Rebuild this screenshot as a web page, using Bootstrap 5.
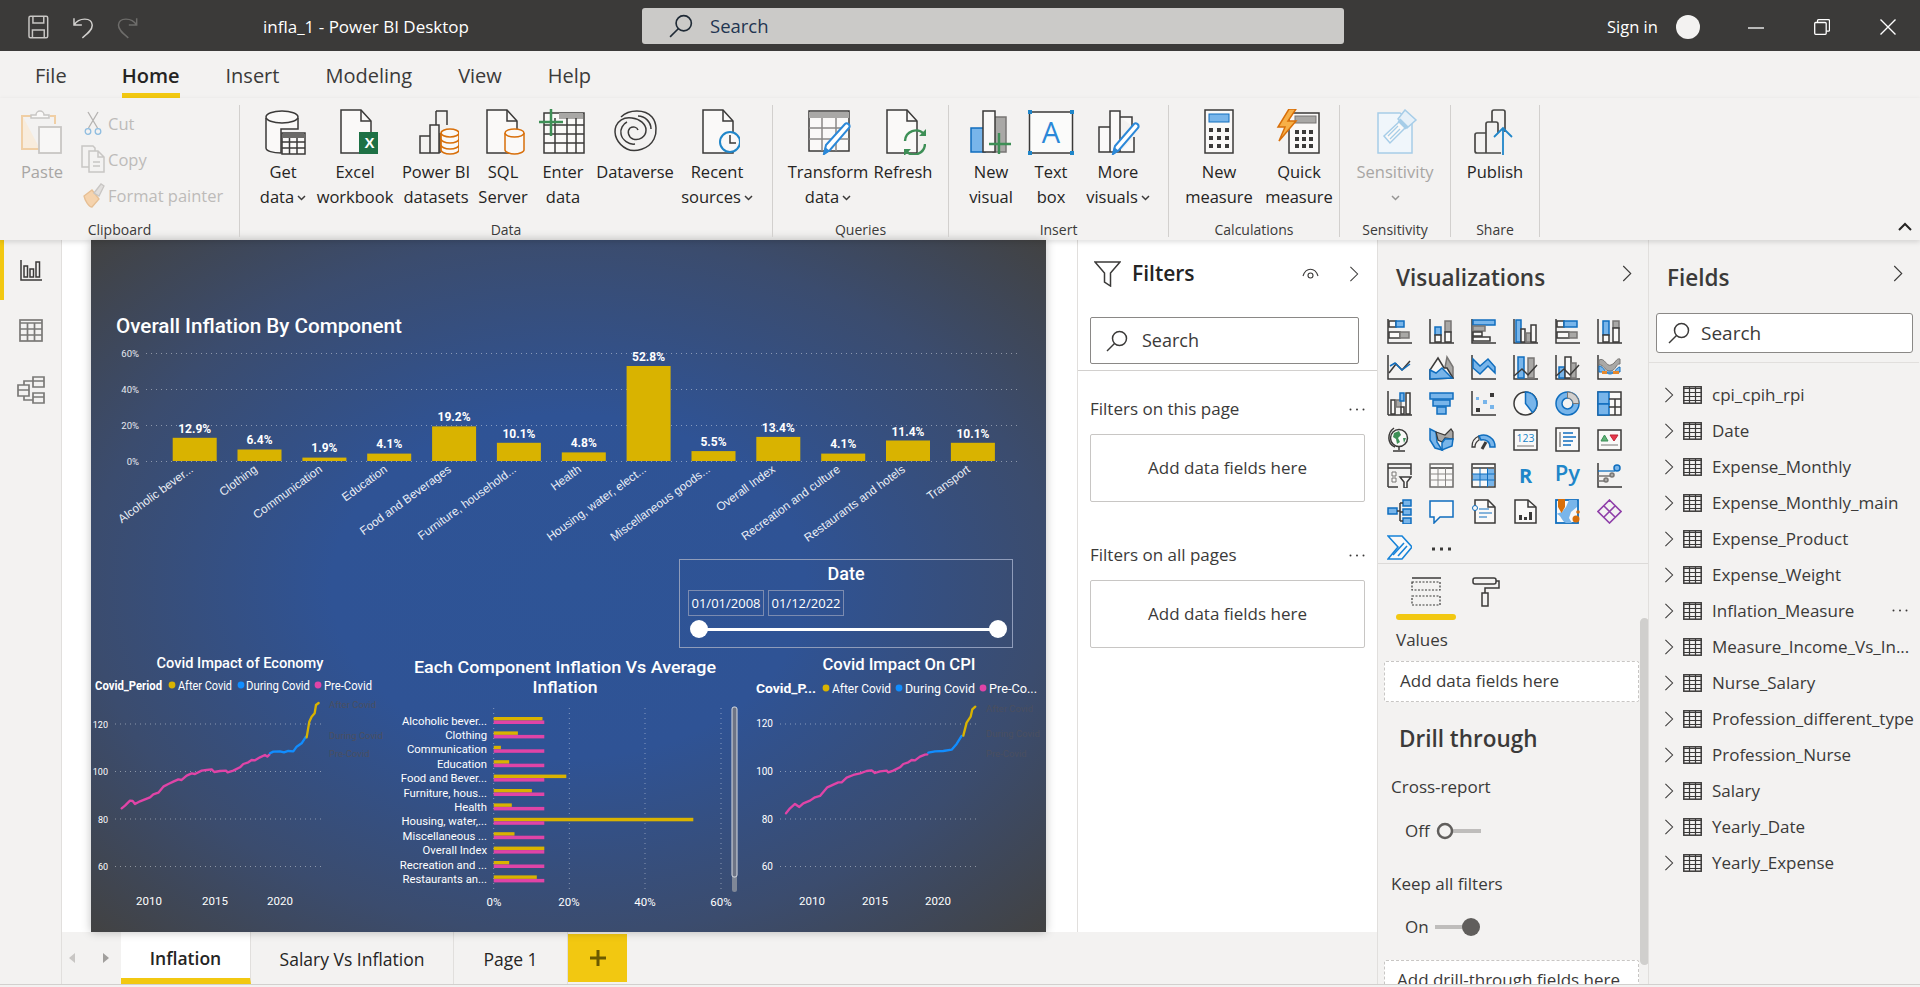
<!DOCTYPE html>
<html lang="en">
<head>
    <meta charset="UTF-8">
    <title>infla_1 - Power BI Desktop</title>
    <link href="https://cdn.jsdelivr.net/npm/bootstrap@5.3.0/dist/css/bootstrap.min.css" rel="stylesheet">
    <style>
        html, body { height: 987px; overflow: hidden; }
        body { font-family: "Open Sans", "Noto Sans", sans-serif; background: #f3f2f1; color: #252423; font-size: 17px; }

        /* title bar */
        .pb-title { height: 51px; background: #3b3a39; color: #fff; flex: none; padding-top: 3px; }
        .pb-title-name { width: 206px; margin-left: 125px; font-size: 17px; white-space: nowrap; }
        .pb-quick { width: 138px; padding-left: 28px; gap: 24px; }
        .pb-search { width: 702px; height: 36px; margin-left: 173px; margin-top: -3px; background: #cbcac8; border-radius: 3px; color: #1f3551; font-size: 18.500px; padding-left: 27px; gap: 17px; }
        .pb-sign { margin-left: 263px; font-size: 16.500px; }
        .pb-avatar { width: 24px; height: 24px; border-radius: 50%; background: #f3f2f1; margin-left: 18px; }
        .pb-winbtns { margin-left: 48px; gap: 50px; }

        /* tabs */
        .pb-tabs { height: 47px; flex: none; padding-left: 35px; font-size: 20px; gap: 46px; color: #3b3a39; }
        .pb-tab { height: 47px; line-height: 50px; }
        .pb-tab-on { color: #252423; font-weight: 600; border-bottom: 5px solid #f2c811; margin-left: 9px; height: 47px; }

        /* ribbon */
        .pb-ribbon { height: 142px; flex: none; position: relative; font-size: 16.500px; line-height: 25px; box-shadow: 0 2px 5px rgba(0,0,0,.13); z-index: 3; }
        .rb-group { height: 132px; margin-top: 7px; border-right: 1px solid #d2d0ce; display: flex; flex-direction: column; flex: none; }
        .rb-items { flex: 1 1 auto; display: flex; min-height: 0; padding-top: 4px; }
        .rb-name { text-align: center; font-size: 14px; line-height: 14px; height: 14px; color: #3b3a39; }
        .rb-btn { display: flex; flex-direction: column; align-items: center; text-align: center; white-space: nowrap; flex: none; }
        .rb-btn svg.ic { display: block; margin-bottom: 4px; width: 46px; height: 46px; flex: none; }
        .rb-cv { width: 9px; height: 6px; vertical-align: 2px; margin-left: 3px; }
        .rb-dim { opacity: .5; }
        .rb-off { color: #a8a6a4; }
        .g-clip { width: 240px; } .g-data { width: 533px; } .g-query { width: 176px; }
        .g-ins { width: 220px; } .g-calc { width: 171px; } .g-sens { width: 111px; } .g-share { width: 89px; }
        .pd-7 { padding-left: 7px; } .pd-15 { padding-left: 15px; } .pd-12 { padding-left: 12px; } .pd-10 { padding-left: 10px; }
        .w44 { width: 44px; } .w60 { width: 60px; } .w68 { width: 68px; } .w70 { width: 70px; } .w72 { width: 72px; } .w74 { width: 74px; }
        .w76 { width: 76px; } .w80 { width: 80px; } .w90 { width: 90px; } .w96 { width: 96px; }
        .wfull { width: 100%; }
        .clip-paste { width: 84px; margin-right: -4px; }
        .clip-rows { color: #bdbbb9; margin-top: -4px; }
        .clip-row { height: 36px; display: flex; align-items: center; }
        .clip-ic { width: 26px; margin-right: 2px; display: flex; justify-content: center; }
        .rb-caret { position: absolute; right: 8px; bottom: 9px; }

        /* main */
        .pb-main { height: 744px; flex: none; }
        .pb-rail { width: 62px; flex: none; border-right: 1px solid #e1dfdd; position: relative; }
        .rail-mark { position: absolute; left: 0; top: 0; width: 4px; height: 60px; background: #f2c811; }
        .rail-ic { height: 60px; }
        .pb-mid { width: 1315px; flex: none; }
        .pb-work { height: 692px; flex: none; background: #fff; }
        .pb-canvas-wrap { width: 1015px; padding-left: 29px; flex: none; }
        .pb-canvas { width: 955px; height: 692px; position: relative; box-shadow: 0 0 9px rgba(0,0,0,.25);
            background: radial-gradient(ellipse farthest-corner at 50% 50%, #2e5496 0%, #2f5395 35%, #3b4c6e 71%, #424242 100%); }
        .pb-canvas > svg { display: block; }

        /* date slicer */
        .dt-slicer { position: absolute; left: 588px; top: 319px; width: 334px; height: 89px; border: 1px solid #8f9cba; color: #fff; padding: 0 8px; font-family: Roboto, sans-serif; }
        .dt-head { text-align: center; font-weight: 500; font-size: 18px; line-height: 27px; margin-bottom: 3px; }
        .dt-box { width: 76px; height: 26px; border: 1px solid #7b8bb0; text-align: center; font-size: 13px; line-height: 24px; font-family: "Open Sans", sans-serif; }
        .dt-track { height: 3px; background: #fff; margin: 12px 6px 0 11px; position: relative; }
        .dt-knob { position: absolute; top: -8px; width: 18px; height: 18px; border-radius: 50%; background: #fff; }
        .dt-kl { left: -9px; } .dt-kr { right: -9px; }

        /* filters */
        .pb-filters { width: 300px; flex: none; border-left: 1px solid #e1dfdd; color: #3b3a39; background: #fff; }
        .flt-head { height: 68px; padding: 0 18px 0 16px; }
        .flt-title { font-size: 21px; font-weight: 600; margin-left: 11px; color: #252423; }
        .flt-eye { margin-right: 30px; }
        .flt-search { height: 47px; margin: 9px 18px 0 12px; border: 1px solid #8a8886; border-radius: 2px; padding-left: 15px; gap: 14px; color: #3b3a39; font-size: 18px; }
        .flt-rule { border-bottom: 1px solid #d2d0ce; height: 7px; }
        .flt-sec { padding: 0 12px; margin-top: 26px; font-size: 17px; line-height: 24px; }
        .flt-drop { height: 68px; border: 1px solid #c8c6c4; border-radius: 2px; margin-top: 13px; margin-bottom: 41px; }

        /* bottom tabs */
        .pb-pages { height: 52px; flex: none; font-size: 17.500px; }
        .pg-arrows { width: 59px; padding-left: 7px; gap: 26px; }
        .pg-tab { height: 52px; border-right: 1px solid #e1dfdd; padding-top: 2px; }
        .pg-on { width: 130px; background: #fff; border-bottom: 6px solid #f2c811; font-weight: 600; padding-top: 6px; }
        .pg-b { width: 203px; } .pg-c { width: 114px; }
        .pg-add { width: 59px; height: 48px; margin-top: 2px; background: #f2c811; color: #6b5a00; }

        /* visualizations */
        .pb-viz { width: 272px; flex: none; border-left: 1px solid #e1dfdd; border-right: 1px solid #e1dfdd; position: relative; overflow: hidden; }
        .pn-head { height: 79px; padding-left: 18px; padding-right: 16px; padding-bottom: 4px; }
        .pn-head svg { margin-top: -8px; }
        .pn-title { font-size: 22.500px; font-weight: 600; color: #3b3a39; }
        .viz-grid { display: grid; grid-template-columns: repeat(6, 42px); grid-auto-rows: 36px; padding-left: 9px; height: 245px; border-bottom: 1px solid #dcdad8; }
        .viz-grid svg { width: 25px; height: 25px; display: block; }
        .viz-tabs { height: 50px; padding-left: 33px; gap: 31px; padding-top: 13px; }
        .viz-line { width: 60px; height: 6px; margin-left: 18px; background: #f2c811; border-radius: 3px; }
        .viz-label { padding-left: 18px; margin-top: 8px; line-height: 24px; font-size: 17px; color: #3b3a39; }
        .viz-drop { width: 255px; height: 41px; margin: 9px 0 0 6px; background: #fff; border: 1px dashed #c8c6c4; border-radius: 2px; padding-left: 15px; line-height: 38px; font-size: 17px; color: #3b3a39; white-space: nowrap; overflow: hidden; }
        .viz-drop2 { margin-top: 21px; padding-left: 12px; }
        .viz-h2 { font-size: 22.500px; font-weight: 600; color: #3b3a39; padding-left: 21px; margin-top: 21px; line-height: 32px; }
        .viz-sub { padding-left: 13px; font-size: 17px; color: #3b3a39; line-height: 24px; }
        .viz-sub-a { margin-top: 20px; } .viz-sub-b { margin-top: 29px; }
        .viz-tog { padding-left: 27px; height: 24px; font-size: 17px; color: #3b3a39; gap: 6px; }
        .viz-tog-a { margin-top: 20px; } .viz-tog-b { margin-top: 19px; }
        .viz-bar { position: absolute; left: 262px; top: 378px; width: 9px; height: 347px; border-radius: 5px; background: #d0cfcd; }

        /* fields */
        .pb-fields { width: 270px; flex: none; }
        .fld-search { height: 40px; margin: -6px 6px 0 7px; background: #fff; border: 1px solid #8a8886; border-radius: 3px; padding-left: 11px; gap: 11px; color: #3b3a39; font-size: 19px; }
        .fld-rule { height: 10px; border-bottom: 1px solid #e1dfdd; }
        .fld-list { margin-top: 14px; --bs-list-group-bg: transparent; --bs-list-group-border-width: 0; --bs-list-group-color: #3b3a39; }
        .fld-item { height: 36px; padding: 0 0 0 15px; display: flex; align-items: center; font-size: 17px; white-space: nowrap; }
        .fld-item .tb { width: 19px; height: 18px; margin: 0 10px 0 9px; flex: none; }
        .fld-dots { position: absolute; right: 11px; top: 16px; }
        .pb-foot { height: 3px; border-top: 1px solid #d2d0ce; flex: none; }

        /* svg helpers */
        .k { fill: none; stroke: #3b3a39; stroke-width: 1.5; }
        .w { fill: #faf9f8; stroke: #3b3a39; stroke-width: 1.5; }
        .b { fill: #78b5ea; stroke: #106ebe; stroke-width: 1.5; }
        .bk { fill: none; stroke: #106ebe; stroke-width: 1.5; }
        .g { fill: #a9a8a6; stroke: #787674; stroke-width: 1.5; }
        .o { fill: #faf9f8; stroke: #d86f0a; stroke-width: 1.5; }
        .sk { fill: none; stroke: #4a4947; stroke-width: 1.7; }
        .chev { fill: none; stroke: #3b3a39; stroke-width: 1.3; }

        /* report canvas */
        .tt { font-family: Roboto, sans-serif; font-weight: 500; fill: #fff; }
        .tv { font-family: Roboto, sans-serif; font-weight: 700; font-size: 12px; fill: #fff; text-anchor: middle; }
        .tx { font-family: "Liberation Sans", sans-serif; font-size: 11.800px; fill: #e9edf5; text-anchor: end; }
        .ta { font-family: Roboto, sans-serif; font-size: 9.500px; fill: #e6e9f0; text-anchor: end; }
        .tl { font-family: Roboto, sans-serif; font-size: 12.500px; fill: #fff; }
        .tlb { font-family: Roboto, sans-serif; font-size: 12.500px; font-weight: 700; fill: #fff; }
        .tm { font-family: Roboto, sans-serif; font-size: 11.300px; fill: #fff; text-anchor: end; }
        .tn { font-family: Roboto, sans-serif; font-size: 11.500px; fill: #fff; text-anchor: middle; }
        .ty { font-family: Roboto, sans-serif; font-size: 9px; fill: #fff; text-anchor: end; }
        .ty2 { font-size: 10px; }
        .td { font-family: Roboto, sans-serif; font-size: 9.500px; fill: #4a4f60; }
        .gd { stroke: rgba(255,255,255,.42); stroke-width: 1; stroke-dasharray: 1 4; fill: none; }
        .yl { fill: #d9b300; } .pk { fill: #e044a7; }
        .ln { fill: none; stroke-width: 7; stroke-linejoin: round; stroke-linecap: round; }
    </style>
</head>
<body class="d-flex flex-column">

<svg width="0" height="0" class="position-absolute">
    <symbol id="tbl" viewBox="0 0 19 18">
        <rect x=".8" y=".8" width="17.400" height="16.400" fill="#f3f2f1" stroke="#3b3a39" stroke-width="1.500"/>
        <path d="M0 2.500H19M0 6.500H19M0 10.500H19M0 14.500H19M6.500 1V17M12.500 1V17" stroke="#3b3a39" stroke-width="1.200" fill="none"/>
    </symbol>
    <symbol id="cvr" viewBox="0 0 12 20"><path d="M1.500 1l9 9-9 9" class="chev"/></symbol>
    <symbol id="cvd" viewBox="0 0 9 6"><path d="M1 1l3.500 3.500L8 1" fill="none" stroke="#3b3a39" stroke-width="1.500"/></symbol>
    <symbol id="mag" viewBox="0 0 22 22"><circle cx="13.500" cy="8.500" r="7" fill="none" stroke="currentColor" stroke-width="1.500"/><path d="M8.500 13.500L1 21" fill="none" stroke="currentColor" stroke-width="1.500"/></symbol>
    <symbol id="dots" viewBox="0 0 16 3"><circle cx="1.500" cy="1.500" r="1" fill="#3b3a39"/><circle cx="8" cy="1.500" r="1" fill="#3b3a39"/><circle cx="14.500" cy="1.500" r="1" fill="#3b3a39"/></symbol>
</svg>

<!-- title bar -->
<div class="pb-title d-flex align-items-center">
    <div class="pb-quick d-flex align-items-center">
        <svg width="21" height="24" viewBox="0 0 21 24" fill="none" stroke="#c8c6c4" stroke-width="1.500"><path d="M1 2.500q0-1.500 1.500-1.500h16q1.500 0 1.500 1.500v19q0 1.500-1.500 1.500h-16q-1.500 0-1.500-1.500z"/><path d="M5 1v7h11V1M4.500 23v-8h12v8"/></svg>
        <svg width="21" height="24" viewBox="0 0 21 24" fill="none" stroke="#d2d0ce" stroke-width="1.500"><path d="M1 3v7h8M1 10C6 2 19 2 19.500 10c.3 5-5 9-10 13"/></svg>
        <svg width="21" height="24" viewBox="0 0 21 24" fill="none" stroke="#6e6d6b" stroke-width="1.500"><path d="M20 3v7h-8M20 10C15 2 2 2 1.500 10c-.3 5 5 9 10 13"/></svg>
    </div>
    <div class="pb-title-name">infla_1 - Power BI Desktop</div>
    <div class="pb-search d-flex align-items-center">
        <svg width="24" height="24"><use href="#mag" color="#1f2a36"/></svg>
        <span>Search</span>
    </div>
    <div class="pb-sign">Sign in</div>
    <div class="pb-avatar"></div>
    <div class="pb-winbtns d-flex align-items-center">
        <svg width="16" height="16" viewBox="0 0 16 16"><path d="M0 9h16" stroke="#fff" stroke-width="1.300"/></svg>
        <svg width="16" height="16" viewBox="0 0 16 16" fill="none" stroke="#fff" stroke-width="1.300"><rect x=".7" y="3.500" width="11.500" height="11.800" rx="1"/><path d="M3.500 3.500V1.700q0-1 1-1h10q1 0 1 1v9.500q0 1-1 1h-2.300"/></svg>
        <svg width="16" height="16" viewBox="0 0 16 16"><path d="M.5.500l15 15M15.500.500l-15 15" stroke="#fff" stroke-width="1.400"/></svg>
    </div>
</div>

<!-- tabs -->
<div class="pb-tabs d-flex">
    <div class="pb-tab">File</div>
    <div class="pb-tab pb-tab-on">Home</div>
    <div class="pb-tab">Insert</div>
    <div class="pb-tab">Modeling</div>
    <div class="pb-tab">View</div>
    <div class="pb-tab">Help</div>
</div>

<!-- ribbon -->
<div class="pb-ribbon d-flex">
    <div class="rb-group g-clip">
        <div class="rb-items">
            <div class="rb-btn clip-paste rb-off">
                <svg class="ic" viewBox="0 0 46 46">
                    <path d="M4 7h9M31 7h5v8" fill="none" stroke="#f0cfa5" stroke-width="2"/>
                    <path d="M3 6v34h18" fill="#f8ecdc" stroke="#f0cfa5" stroke-width="2"/>
                    <path d="M12 9V6h5a4 4 0 0 1 8 0h5v3z" fill="#faf9f8" stroke="#c8c6c4" stroke-width="1.500"/>
                    <rect x="20" y="18" width="22" height="26" fill="#f8f7f6" stroke="#c8c6c4" stroke-width="1.800"/>
                </svg>
                <span>Paste</span>
            </div>
            <div class="clip-rows">
                <div class="clip-row"><span class="clip-ic">
                    <svg width="18" height="24" viewBox="0 0 18 24" fill="none" stroke-width="1.300"><path d="M14 1L4.500 17M4 1l9.500 16" stroke="#b5b3b1"/><circle cx="4" cy="20.500" r="2.800" stroke="#8fbde0"/><circle cx="14" cy="20.500" r="2.800" stroke="#8fbde0"/></svg>
                </span>Cut</div>
                <div class="clip-row"><span class="clip-ic">
                    <svg width="24" height="28" viewBox="0 0 24 28" fill="none" stroke="#c8c6c4" stroke-width="1.500"><path d="M8 22H1V1h11l2 2v3"/><path d="M8 6h9l6 6v15H8zM17 6v6h6M12 17h7M12 21h7"/></svg>
                </span>Copy</div>
                <div class="clip-row"><span class="clip-ic">
                    <svg width="24" height="26" viewBox="0 0 24 26"><path d="M3 14l8-6 7 9-7 8c-3 0-7-6-8-11z" fill="#f5d3ad" stroke="#e6bf94" stroke-width="1.300"/><path d="M13 11L20 2l3 2-5 10z" fill="#e1dfdd" stroke="#c8c6c4" stroke-width="1.300"/></svg>
                </span>Format painter</div>
            </div>
        </div>
        <div class="rb-name">Clipboard</div>
    </div>

    <div class="rb-group g-data">
        <div class="rb-items pd-7">
            <div class="rb-btn w72">
                <svg class="ic" viewBox="-4 0 46 46">
                    <path d="M2 9v30c0 3 7 5 15 5V20h17V9" class="w"/>
                    <ellipse cx="18" cy="8" rx="16" ry="6" class="w"/>
                    <rect x="18" y="24" width="23" height="21" class="w"/>
                    <path d="M18 27h23" stroke="#6b6a68" stroke-width="4"/>
                    <path d="M18 33h23M18 39h23M25.500 29v16M33 29v16" class="k"/>
                </svg>
                <span>Get<br>data<svg class="rb-cv"><use href="#cvd"/></svg></span>
            </div>
            <div class="rb-btn w72">
                <svg class="ic" viewBox="-4 0 46 46">
                    <path d="M5 1h20l10 11v32H5z" class="w"/><path d="M25 1v11h10" class="k"/>
                    <rect x="23" y="23" width="21" height="22" fill="#1e7145"/>
                    <text x="33.500" y="39" text-anchor="middle" font-family="Liberation Sans" font-weight="700" font-size="15" fill="#fff">X</text>
                </svg>
                <span>Excel<br>workbook</span>
            </div>
            <div class="rb-btn w90">
                <svg class="ic" viewBox="-4 0 46 46">
                    <path d="M3 27h10v17H3zM13 16h9v28H13zM19 2h11v14" class="k"/><path d="M19 16V2" class="k"/>
                    <path d="M23 44V24" class="k"/>
                    <g fill="#faf9f8" stroke="#d86f0a" stroke-width="1.700"><path d="M24 24v17c0 2 4 4 9 4s9-2 9-4V24"/><ellipse cx="33" cy="24" rx="9" ry="4"/><path d="M24 30c0 2 4 4 9 4s9-2 9-4M24 36c0 2 4 4 9 4s9-2 9-4" fill="none"/></g>
                </svg>
                <span>Power BI<br>datasets</span>
            </div>
            <div class="rb-btn w44">
                <svg class="ic" viewBox="-3 0 46 46">
                    <path d="M4 1h20l10 11v32H4z" class="w"/><path d="M24 1v11h10" class="k"/>
                    <path d="M22 24v17c0 2 5 4 9.500 4s9.500-2 9.500-4V24" class="o"/><ellipse cx="31.500" cy="24" rx="9.500" ry="4" class="o"/>
                </svg>
                <span>SQL<br>Server</span>
            </div>
            <div class="rb-btn w76">
                <svg class="ic" viewBox="-1 0 46 46" overflow="visible">
                    <rect x="3" y="4" width="40" height="40" class="w"/>
                    <path d="M18 7h24" stroke="#a9a8a6" stroke-width="6"/>
                    <path d="M3 16h40M3 25h40M3 34h40M14 9v35M26 9v35M35 9v35" class="k"/>
                    <path d="M10 0v27M-2 13h24" stroke="#3d8f56" stroke-width="2.500"/>
                </svg>
                <span>Enter<br>data</span>
            </div>
            <div class="rb-btn w68">
                <svg class="ic" viewBox="0 0 46 46" fill="none" stroke="#3b3a39" stroke-width="1.500">
                    <path d="M9 8c8-8 24-8 31 0 5 6 5 16 2 22-5 10-19 14-27 10C5 35 1 25 4 17c3-6 9-9 16-8 8 1 14 6 14 12 0 7-7 11-13 9-5-2-6-8-3-11 3-2 7-1 8 2"/>
                    <path d="M15 13c-4 2-7 7-6 12 1 6 8 11 14 10"/><path d="M26 7c7 0 13 6 13 13"/>
                </svg>
                <span>Dataverse</span>
            </div>
            <div class="rb-btn w96">
                <svg class="ic" viewBox="-3 0 46 46">
                    <path d="M6 1h20l10 11v32H6z" class="w"/><path d="M26 1v11h10" class="k"/>
                    <circle cx="33" cy="33" r="10" fill="#faf9f8" stroke="#2086c9" stroke-width="2"/><path d="M33 26v8h6" fill="none" stroke="#3b3a39" stroke-width="1.500"/>
                </svg>
                <span>Recent<br>sources<svg class="rb-cv"><use href="#cvd"/></svg></span>
            </div>
        </div>
        <div class="rb-name">Data</div>
    </div>

    <div class="rb-group g-query">
        <div class="rb-items pd-15">
            <div class="rb-btn w80">
                <svg class="ic" viewBox="-2 0 46 46">
                    <rect x="2" y="2" width="40" height="40" class="w"/>
                    <path d="M2 6h40" stroke="#a9a8a6" stroke-width="6"/>
                    <path d="M2 19h40M2 30h40M15 9v33M29 9v33" fill="none" stroke="#8a8886" stroke-width="1.500"/>
                    <path d="M17 45l2-9 19-21c2-2 6 1 4 4L23 41z" fill="#fff" stroke="#2b88d8" stroke-width="2"/><path d="M16 46l2-8 5 4z" fill="#2b88d8"/>
                </svg>
                <span>Transform<br>data<svg class="rb-cv"><use href="#cvd"/></svg></span>
            </div>
            <div class="rb-btn w70">
                <svg class="ic" viewBox="-3 0 46 46">
                    <path d="M4 1h20l10 11v32H4z" class="w"/><path d="M24 1v11h10" class="k"/>
                    <path d="M22 32a11 11 0 0 1 19-7M42 35a11 11 0 0 1-19 7" fill="none" stroke="#3d8f56" stroke-width="2.400"/>
                    <path d="M43 20v7h-7zM21 47v-7h7z" fill="#3d8f56"/>
                </svg>
                <span>Refresh</span>
            </div>
        </div>
        <div class="rb-name">Queries</div>
    </div>

    <div class="rb-group g-ins">
        <div class="rb-items pd-12">
            <div class="rb-btn w60">
                <svg class="ic" viewBox="0 0 46 46">
                    <rect x="3" y="19" width="14" height="24" class="b"/>
                    <rect x="25" y="8" width="13" height="35" class="g"/>
                    <rect x="15" y="2" width="12" height="41" class="w"/>
                    <path d="M31 24v21M21 35h22" stroke="#3d8f56" stroke-width="2.400"/>
                </svg>
                <span>New<br>visual</span>
            </div>
            <div class="rb-btn w60">
                <svg class="ic" viewBox="0 0 46 46">
                    <rect x="1.500" y="3" width="43" height="41" fill="#fbfbfa" stroke="#3b3a39" stroke-width="1.500"/>
                    <path d="M0 1h4v4H0zM42 1h4v4h-4zM0 42h4v4H0zM42 42h4v4h-4z" fill="#2086c9"/>
                    <text x="23" y="34" text-anchor="middle" font-family="Open Sans" font-size="29" fill="#2b88d8">A</text>
                </svg>
                <span>Text<br>box</span>
            </div>
            <div class="rb-btn w74">
                <svg class="ic" viewBox="-1 0 46 46">
                    <path d="M3 18h11v25H3zM24 8h12v9M14 2h10v41H14zM24 43h14V28" class="w"/>
                    <path d="M17 45l2-8 19-22c2-2 6 1 4 4L23 41z" fill="#fff" stroke="#2b88d8" stroke-width="2"/><path d="M16 46l2-8 5 4z" fill="#2b88d8"/>
                </svg>
                <span>More<br>visuals<svg class="rb-cv"><use href="#cvd"/></svg></span>
            </div>
        </div>
        <div class="rb-name">Insert</div>
    </div>

    <div class="rb-group g-calc">
        <div class="rb-items pd-10">
            <div class="rb-btn w80">
                <svg class="ic" viewBox="0 0 46 46">
                    <rect x="9" y="1" width="28" height="43" class="w"/>
                    <rect x="13" y="5" width="20" height="8" fill="#78b5ea" stroke="#106ebe"/>
                    <path d="M13 19h4v4h-4zM21 19h4v4h-4zM29 19h4v4h-4zM13 27h4v4h-4zM21 27h4v4h-4zM29 27h4v4h-4zM13 35h4v4h-4zM21 35h4v4h-4zM29 35h4v4h-4z" fill="#3b3a39"/>
                </svg>
                <span>New<br>measure</span>
            </div>
            <div class="rb-btn w80">
                <svg class="ic" viewBox="0 0 46 46">
                    <rect x="13" y="4" width="30" height="40" class="w"/>
                    <rect x="19" y="7" width="21" height="7" fill="#a9a8a6" stroke="#787674"/>
                    <path d="M19 21h4v4h-4zM26 21h4v4h-4zM33 21h4v4h-4zM19 28h4v4h-4zM26 28h4v4h-4zM33 28h4v4h-4zM19 35h4v4h-4zM26 35h4v4h-4zM33 35h4v4h-4z" fill="#3b3a39"/>
                    <path d="M13 0L2 18h7l-6 14 17-20h-8l8-12z" fill="#f7b048" stroke="#d86f0a" stroke-width="1.500"/>
                </svg>
                <span>Quick<br>measure</span>
            </div>
        </div>
        <div class="rb-name">Calculations</div>
    </div>

    <div class="rb-group g-sens">
        <div class="rb-items">
            <div class="rb-btn wfull rb-off">
                <svg class="ic" viewBox="0 0 46 46">
                    <path d="M6 4h22l12 10v30H6z" fill="#f0f6fb" stroke="#a6cde8" stroke-width="1.500"/>
                    <path d="M12 27l16-15 6 6-16 16z" fill="#faf9f8" stroke="#a6cde8" stroke-width="1.500"/>
                    <path d="M16 27l10-10M18 30l10-10" stroke="#a6cde8" stroke-width="1.300"/>
                    <path d="M26 10L33 1l11 10-9 8z" fill="#e6f0f8" stroke="#a6cde8" stroke-width="1.500"/><path d="M27 11l8 8" stroke="#a6cde8" stroke-width="4"/>
                </svg>
                <span>Sensitivity<br><svg class="rb-cv rb-dim m-0"><use href="#cvd"/></svg></span>
            </div>
        </div>
        <div class="rb-name">Sensitivity</div>
    </div>

    <div class="rb-group g-share">
        <div class="rb-items">
            <div class="rb-btn wfull">
                <svg class="ic" viewBox="0 0 46 46">
                    <path d="M3 26q0-2 2-2h9v20H5q-2 0-2-2zM14 24v-9q0-2 2-2h8q2 0 2 2v9M20 13V3q0-2 2-2h9q2 0 2 2v20M14 44h15" class="sk"/>
                    <path d="M31 46V19M22 28l9-9 9 9" fill="none" stroke="#2086c9" stroke-width="1.800"/>
                </svg>
                <span>Publish</span>
            </div>
        </div>
        <div class="rb-name">Share</div>
    </div>

    <svg class="rb-caret" width="14" height="9" viewBox="0 0 14 9"><path d="M1 8l6-6 6 6" fill="none" stroke="#252423" stroke-width="2"/></svg>
</div>

<!-- main area -->
<div class="pb-main d-flex">
    <div class="pb-rail">
        <div class="rail-mark"></div>
        <div class="rail-ic d-flex align-items-center justify-content-center">
            <svg width="22" height="21" viewBox="0 0 22 21" fill="none" stroke="#3b3a39" stroke-width="1.500"><path d="M1 0v20h21"/><rect x="4" y="6" width="3.500" height="11"/><rect x="10" y="9" width="3.500" height="8"/><rect x="16" y="2" width="3.500" height="15"/></svg>
        </div>
        <div class="rail-ic d-flex align-items-center justify-content-center">
            <svg width="24" height="23" viewBox="0 0 24 23" fill="none" stroke="#7a7977" stroke-width="1.700"><rect x="1" y="1" width="22" height="21"/><path d="M1 4h22M1 10h22M1 16h22M8.500 4v18M15.500 4v18"/></svg>
        </div>
        <div class="rail-ic d-flex align-items-center justify-content-center">
            <svg width="28" height="28" viewBox="0 0 28 28" fill="none" stroke="#7a7977" stroke-width="1.700"><path d="M1 9h11v11H1zM1 14h11M16 1h11v10H16zM16 5h11M16 17h11v10H16zM16 21h11M7 9V5h9M7 20v4h9"/></svg>
        </div>
    </div>

    <div class="pb-mid d-flex flex-column">
        <div class="pb-work d-flex">
            <div class="pb-canvas-wrap">
                <div class="pb-canvas">
                    <svg width="955" height="692" viewBox="91 240 955 692">
                        <!-- overall inflation -->
                        <text class="tt" x="116" y="333" font-size="19.500" textLength="286" lengthAdjust="spacingAndGlyphs">Overall Inflation By Component</text>
                        <path class="gd" d="M146 353.500H1019M146 389.500H1019M146 425.500H1019M146 461.500H1019"/>
                        <text class="ta" x="139" y="356.500">60%</text>
                        <text class="ta" x="139" y="392.500">40%</text>
                        <text class="ta" x="139" y="428.500">20%</text>
                        <text class="ta" x="139" y="464.500">0%</text>
                        <g class="yl">
                            <rect x="172.700" y="437.800" width="44" height="23.200"/>
                            <rect x="237.500" y="449.500" width="44" height="11.500"/>
                            <rect x="302.400" y="457.600" width="44" height="3.400"/>
                            <rect x="367.200" y="453.600" width="44" height="7.400"/>
                            <rect x="432.100" y="426.400" width="44" height="34.600"/>
                            <rect x="496.900" y="442.800" width="44" height="18.200"/>
                            <rect x="561.800" y="452.400" width="44" height="8.600"/>
                            <rect x="626.600" y="366" width="44" height="95"/>
                            <rect x="691.500" y="451.100" width="44" height="9.900"/>
                            <rect x="756.300" y="436.900" width="44" height="24.100"/>
                            <rect x="821.200" y="453.600" width="44" height="7.400"/>
                            <rect x="886" y="440.500" width="44" height="20.500"/>
                            <rect x="950.900" y="442.800" width="44" height="18.200"/>
                        </g>
                        <text class="tv" x="194.700" y="432.500">12.9%</text>
                        <text class="tv" x="259.500" y="444">6.4%</text>
                        <text class="tv" x="324.400" y="452">1.9%</text>
                        <text class="tv" x="389.200" y="448">4.1%</text>
                        <text class="tv" x="454.100" y="421">19.2%</text>
                        <text class="tv" x="518.900" y="437.500">10.1%</text>
                        <text class="tv" x="583.800" y="447">4.8%</text>
                        <text class="tv" x="648.600" y="361">52.8%</text>
                        <text class="tv" x="713.500" y="446">5.5%</text>
                        <text class="tv" x="778.300" y="431.500">13.4%</text>
                        <text class="tv" x="843.200" y="448">4.1%</text>
                        <text class="tv" x="908" y="435.500">11.4%</text>
                        <text class="tv" x="972.900" y="437.500">10.1%</text>
                        <text class="tx" transform="translate(194 471) rotate(-36)">Alcoholic bever...</text>
                        <text class="tx" transform="translate(258 471) rotate(-36)">Clothing</text>
                        <text class="tx" transform="translate(323 471) rotate(-36)">Communication</text>
                        <text class="tx" transform="translate(388 471) rotate(-36)">Education</text>
                        <text class="tx" transform="translate(452 471) rotate(-36)">Food and Beverages</text>
                        <text class="tx" transform="translate(517 471) rotate(-36)">Furniture, household...</text>
                        <text class="tx" transform="translate(582 471) rotate(-36)">Health</text>
                        <text class="tx" transform="translate(647 471) rotate(-36)">Housing, water, elect...</text>
                        <text class="tx" transform="translate(711 471) rotate(-36)">Miscellaneous goods...</text>
                        <text class="tx" transform="translate(776 471) rotate(-36)">Overall Index</text>
                        <text class="tx" transform="translate(841 471) rotate(-36)">Recreation and culture</text>
                        <text class="tx" transform="translate(906 471) rotate(-36)">Restaurants and hotels</text>
                        <text class="tx" transform="translate(971 471) rotate(-36)">Transport</text>

                        <!-- covid impact of economy -->
                        <text class="tt" x="240" y="668" font-size="15" text-anchor="middle" textLength="167" lengthAdjust="spacingAndGlyphs">Covid Impact of Economy</text>
                        <text class="tlb" x="95" y="689.500" textLength="67" lengthAdjust="spacingAndGlyphs">Covid_Period</text>
                        <circle cx="172" cy="685" r="3.400" fill="#d9b300"/><text class="tl" x="178" y="689.500" textLength="54" lengthAdjust="spacingAndGlyphs">After Covid</text>
                        <circle cx="241" cy="685" r="3.400" fill="#118dff"/><text class="tl" x="246" y="689.500" textLength="64" lengthAdjust="spacingAndGlyphs">During Covid</text>
                        <circle cx="318" cy="685" r="3.400" fill="#e044a7"/><text class="tl" x="324" y="689.500" textLength="48" lengthAdjust="spacingAndGlyphs">Pre-Covid</text>
                        <path class="gd" d="M115 724H323M115 771.500H323M115 819H323M115 866.500H323"/>
                        <text class="ty" x="108" y="727.500">120</text><text class="ty" x="108" y="775">100</text><text class="ty" x="108" y="822.500">80</text><text class="ty" x="108" y="870">60</text>
                        <text class="tn" x="149" y="905">2010</text><text class="tn" x="215" y="905">2015</text><text class="tn" x="280" y="905">2020</text>
                        <text class="td" x="329" y="708">After Covid</text><text class="td" x="329" y="739">During Covid</text><text class="td" x="329" y="757">Pre-Covid</text>
                        <g transform="translate(80 640) scale(.3333)">
                            <polyline class="ln" stroke="#e044a7" points="125,505 135,497 150,482 158,483 165,492 180,484 195,478 210,472 220,463 235,458 250,440 265,432 280,425 295,418 305,420 320,407 335,400 345,402 365,392 380,390 395,388 403,396 420,393 438,392 443,397 460,392 480,382 490,372 505,367 515,360 525,361 540,352 555,345 562,350 568,344"/>
                            <polyline class="ln" stroke="#118dff" points="570,340 580,335 600,334 612,337 625,333 640,334 650,320 665,310 678,290"/>
                            <polyline class="ln" stroke="#d9b300" points="680,292 688,245 695,230 704,220 708,195 716,189"/>
                        </g>

                        <!-- each component -->
                        <text class="tt" x="565" y="673" font-size="17" text-anchor="middle" textLength="302" lengthAdjust="spacingAndGlyphs">Each Component Inflation Vs Average</text>
                        <text class="tt" x="565" y="693" font-size="17" text-anchor="middle" textLength="65" lengthAdjust="spacingAndGlyphs">Inflation</text>
                        <path class="gd" d="M493.700 708V892M569.300 708V892M645 708V892M721 708V892"/>
                        <text class="tm" x="487" y="724.500">Alcoholic bever...</text>
                        <text class="tm" x="487" y="738.900">Clothing</text>
                        <text class="tm" x="487" y="753.300">Communication</text>
                        <text class="tm" x="487" y="767.700">Education</text>
                        <text class="tm" x="487" y="782.100">Food and Bever...</text>
                        <text class="tm" x="487" y="796.500">Furniture, hous...</text>
                        <text class="tm" x="487" y="810.900">Health</text>
                        <text class="tm" x="487" y="825.300">Housing, water,...</text>
                        <text class="tm" x="487" y="839.700">Miscellaneous ...</text>
                        <text class="tm" x="487" y="854.100">Overall Index</text>
                        <text class="tm" x="487" y="868.500">Recreation and ...</text>
                        <text class="tm" x="487" y="882.900">Restaurants an...</text>
                        <g class="yl">
                            <rect x="493.700" y="717" width="48.800" height="3.500"/>
                            <rect x="493.700" y="731.400" width="24.200" height="3.500"/>
                            <rect x="493.700" y="745.800" width="7.200" height="3.500"/>
                            <rect x="493.700" y="760.200" width="15.500" height="3.500"/>
                            <rect x="493.700" y="774.600" width="72.600" height="3.500"/>
                            <rect x="493.700" y="789" width="38.200" height="3.500"/>
                            <rect x="493.700" y="803.400" width="18.100" height="3.500"/>
                            <rect x="493.700" y="817.800" width="199.600" height="3.500"/>
                            <rect x="493.700" y="832.200" width="20.800" height="3.500"/>
                            <rect x="493.700" y="846.600" width="50.600" height="3.500"/>
                            <rect x="493.700" y="861" width="15.500" height="3.500"/>
                            <rect x="493.700" y="875.400" width="43.100" height="3.500"/>
                        </g>
                        <g class="pk">
                            <rect x="493.700" y="720.500" width="50.600" height="3.500"/>
                            <rect x="493.700" y="734.900" width="50.600" height="3.500"/>
                            <rect x="493.700" y="749.300" width="50.600" height="3.500"/>
                            <rect x="493.700" y="763.700" width="50.600" height="3.500"/>
                            <rect x="493.700" y="778.100" width="50.600" height="3.500"/>
                            <rect x="493.700" y="792.500" width="50.600" height="3.500"/>
                            <rect x="493.700" y="806.900" width="50.600" height="3.500"/>
                            <rect x="493.700" y="821.300" width="50.600" height="3.500"/>
                            <rect x="493.700" y="835.700" width="50.600" height="3.500"/>
                            <rect x="493.700" y="850.100" width="50.600" height="3.500"/>
                            <rect x="493.700" y="864.500" width="50.600" height="3.500"/>
                            <rect x="493.700" y="878.900" width="50.600" height="3.500"/>
                        </g>
                        <text class="tn" x="494" y="906">0%</text><text class="tn" x="569" y="906">20%</text><text class="tn" x="645" y="906">40%</text><text class="tn" x="721" y="906">60%</text>
                        <rect x="732" y="707" width="5" height="185" rx="2.500" fill="#7f8797"/>
                        <rect x="732" y="707" width="5" height="170" rx="2" fill="#6d7486" stroke="#d9dce3" stroke-width="1"/>

                        <!-- covid impact on cpi -->
                        <text class="tt" x="899" y="669.500" font-size="16" text-anchor="middle" textLength="153" lengthAdjust="spacingAndGlyphs">Covid Impact On CPI</text>
                        <text class="tlb" x="756" y="692.500" textLength="60" lengthAdjust="spacingAndGlyphs">Covid_P...</text>
                        <circle cx="826" cy="688" r="3.400" fill="#d9b300"/><text class="tl" x="832" y="692.500" textLength="59" lengthAdjust="spacingAndGlyphs">After Covid</text>
                        <circle cx="899" cy="688" r="3.400" fill="#118dff"/><text class="tl" x="905" y="692.500" textLength="70" lengthAdjust="spacingAndGlyphs">During Covid</text>
                        <circle cx="983" cy="688" r="3.400" fill="#e044a7"/><text class="tl" x="989" y="692.500" textLength="48" lengthAdjust="spacingAndGlyphs">Pre-Co...</text>
                        <path class="gd" d="M780 724H980M780 771.500H980M780 819H980M780 866.500H980"/>
                        <text class="ty ty2" x="773" y="727">120</text><text class="ty ty2" x="773" y="775">100</text><text class="ty ty2" x="773" y="822.500">80</text><text class="ty ty2" x="773" y="870">60</text>
                        <text class="tn" x="812" y="905">2010</text><text class="tn" x="875" y="905">2015</text><text class="tn" x="938" y="905">2020</text>
                        <text class="td" x="986" y="712">After Covid</text><text class="td" x="986" y="737">During Covid</text><text class="td" x="986" y="757">Pre-Covid</text>
                        <g transform="translate(740 640) scale(.3333)">
                            <polyline class="ln" stroke="#e044a7" points="138,520 150,505 165,492 178,501 190,490 210,482 225,472 240,468 262,442 280,434 295,427 305,427 320,413 340,405 360,400 380,393 395,391 405,399 420,394 440,392 445,397 460,392 480,382 490,372 505,367 515,360 525,361 540,350 555,344 562,343"/>
                            <polyline class="ln" stroke="#118dff" points="565,338 585,334 610,333 635,329 650,312 665,288"/>
                            <polyline class="ln" stroke="#d9b300" points="670,287 680,248 692,230 697,208 706,200"/>
                        </g>
                    </svg>

                    <div class="dt-slicer">
                        <div class="dt-head">Date</div>
                        <div class="d-flex gap-1">
                            <div class="dt-box">01/01/2008</div>
                            <div class="dt-box">01/12/2022</div>
                        </div>
                        <div class="dt-track">
                            <div class="dt-knob dt-kl"></div>
                            <div class="dt-knob dt-kr"></div>
                        </div>
                    </div>
                </div>
            </div>

            <div class="pb-filters">
                <div class="flt-head d-flex align-items-center">
                    <svg width="27" height="26" viewBox="0 0 27 26" fill="none" stroke="#3b3a39" stroke-width="1.500"><path d="M1 1h25L16.500 12v13l-6-4v-9z"/></svg>
                    <span class="flt-title">Filters</span>
                    <svg class="ms-auto flt-eye" width="17" height="12" viewBox="0 0 17 12" fill="none" stroke="#3b3a39" stroke-width="1.100"><path d="M1 8c3-9 12-9 15 0"/><circle cx="8.500" cy="7.500" r="2.500"/></svg>
                    <svg width="10" height="16"><use href="#cvr"/></svg>
                </div>
                <div class="flt-search d-flex align-items-center">
                    <svg width="22" height="22"><use href="#mag" color="#3b3a39"/></svg>
                    <span>Search</span>
                </div>
                <div class="flt-rule"></div>
                <div class="flt-sec">
                    <div class="d-flex justify-content-between align-items-center"><span>Filters on this page</span><svg width="16" height="3"><use href="#dots"/></svg></div>
                    <div class="flt-drop d-flex align-items-center justify-content-center">Add data fields here</div>
                    <div class="d-flex justify-content-between align-items-center"><span>Filters on all pages</span><svg width="16" height="3"><use href="#dots"/></svg></div>
                    <div class="flt-drop d-flex align-items-center justify-content-center">Add data fields here</div>
                </div>
            </div>
        </div>

        <div class="pb-pages d-flex">
            <div class="pg-arrows d-flex align-items-center">
                <svg width="7" height="10" viewBox="0 0 7 10"><path d="M6 0v10L0 5z" fill="#c8c6c4"/></svg>
                <svg width="7" height="10" viewBox="0 0 7 10"><path d="M1 0v10l6-5z" fill="#a19f9d"/></svg>
            </div>
            <div class="pg-tab pg-on d-flex align-items-center justify-content-center">Inflation</div>
            <div class="pg-tab pg-b d-flex align-items-center justify-content-center">Salary Vs Inflation</div>
            <div class="pg-tab pg-c d-flex align-items-center justify-content-center">Page 1</div>
            <div class="pg-add d-flex align-items-center justify-content-center">
                <svg width="16" height="16" viewBox="0 0 16 16"><path d="M8 0v16M0 8h16" stroke="#6b5a00" stroke-width="3"/></svg>
            </div>
        </div>
    </div>

    <!-- visualizations pane -->
    <div class="pb-viz">
        <div class="pn-head d-flex align-items-center justify-content-between">
            <span class="pn-title">Visualizations</span>
            <svg width="10" height="17"><use href="#cvr"/></svg>
        </div>
        <div class="viz-grid">
            <svg viewBox="0 0 25 25"><path d="M1 0v24h24" class="k"/><rect x="2" y="2" width="7" height="6" class="w"/><rect x="9" y="2" width="8" height="6" class="b"/><rect x="2" y="13" width="11" height="6" class="w"/><rect x="13" y="13" width="9" height="6" class="g"/></svg>
            <svg viewBox="0 0 25 25"><path d="M1 0v24h24" class="k"/><rect x="6" y="8" width="6" height="8" class="b"/><rect x="6" y="16" width="6" height="7" class="w"/><rect x="16" y="2" width="6" height="11" class="g"/><rect x="16" y="13" width="6" height="10" class="w"/></svg>
            <svg viewBox="0 0 25 25"><path d="M1 0v24h24" class="k"/><rect x="2" y="1" width="22" height="5" class="b"/><rect x="2" y="7" width="12" height="5" class="g"/><rect x="2" y="13" width="9" height="4" class="w"/><rect x="2" y="18" width="17" height="4" class="w"/></svg>
            <svg viewBox="0 0 25 25"><path d="M1 0v24h24" class="k"/><rect x="3" y="1" width="5" height="22" class="b"/><rect x="8" y="10" width="4" height="13" class="w"/><rect x="13" y="14" width="5" height="9" class="g"/><rect x="18" y="6" width="5" height="17" class="w"/></svg>
            <svg viewBox="0 0 25 25"><path d="M1 0v24h24" class="k"/><rect x="2" y="2" width="7" height="6" class="w"/><rect x="9" y="2" width="13" height="6" class="b"/><rect x="2" y="13" width="12" height="6" class="w"/><rect x="14" y="13" width="8" height="6" class="g"/></svg>
            <svg viewBox="0 0 25 25"><path d="M1 0v24h24" class="k"/><rect x="6" y="2" width="6" height="14" class="b"/><rect x="6" y="16" width="6" height="7" class="w"/><rect x="16" y="2" width="6" height="7" class="g"/><rect x="16" y="9" width="6" height="14" class="w"/></svg>

            <svg viewBox="0 0 25 25"><path d="M1 0v24h24" class="k"/><path d="M2 18l7-9 6 6 8-9" class="k"/><path d="M3 11l5-3 7 7 8-6" class="bk"/></svg>
            <svg viewBox="0 0 25 25"><path d="M14 23L18 2l6 10v11z" class="g"/><path d="M1 24V15L9 3l6 10 3 0 6 10z" class="w"/><path d="M1 24v-9l6 3 6-5 10 10z" class="b"/></svg>
            <svg viewBox="0 0 25 25"><path d="M1 0v24h24" class="k"/><path d="M2 4l7 7 8-7 7 8v6l-7-7-8 8-7-6z" class="b"/></svg>
            <svg viewBox="0 0 25 25"><path d="M1 0v24h24" class="k"/><rect x="5" y="2" width="6" height="21" class="b"/><rect x="15" y="3" width="6" height="20" class="g"/><path d="M1 21l8-7 6 6 9-10" class="k"/></svg>
            <svg viewBox="0 0 25 25"><path d="M1 0v24h24" class="k"/><rect x="4" y="12" width="6" height="11" class="b"/><rect x="10" y="2" width="6" height="21" class="w"/><rect x="16" y="8" width="5" height="15" class="g"/><path d="M1 21l8-7 6 6 9-10" class="k"/></svg>
            <svg viewBox="0 0 25 25"><path d="M1 0v24h24" class="k"/><path d="M2 5c6-3 7 7 12 5s5-7 9-6v5c-4-1-4 7-10 7S7 9 2 10z" fill="#a9a8a6" stroke="#787674"/><path d="M2 11c5 0 6 8 11 8s6-7 10-7v5H2z" fill="#78b5ea" stroke="#106ebe"/><path d="M5 16h5v3H5zM16 16h6v3h-6z" fill="#e8892b"/></svg>

            <svg viewBox="0 0 25 25"><path d="M1 24V0M1 24h24" class="k"/><rect x="4" y="9" width="4" height="14" class="w"/><rect x="9" y="9" width="5" height="7" class="g"/><rect x="13" y="2" width="4" height="8" class="b"/><rect x="14" y="16" width="3" height="7" class="w"/><rect x="19" y="2" width="4" height="21" class="w"/></svg>
            <svg viewBox="0 0 25 25"><rect x="1" y="2" width="23" height="6" class="b"/><rect x="4" y="9" width="17" height="6" class="b"/><rect x="8" y="16" width="9" height="7" class="b"/></svg>
            <svg viewBox="0 0 25 25"><path d="M1 0v24h24" class="k"/><path d="M5 17h4v4H5zM19 2h4v4h-4z" fill="#3b3a39"/><path d="M5 6h3v3H5zM12 9h4v4h-4zM19 14h4v4h-4z" fill="#78b5ea"/></svg>
            <svg viewBox="0 0 25 25"><circle cx="12.500" cy="12.500" r="11.500" fill="#faf9f8" stroke="#3b3a39" stroke-width="1.500"/><path d="M12.500 1a11.500 11.500 0 0 1 7 20.500l-7-9z" class="b"/></svg>
            <svg viewBox="0 0 25 25"><circle cx="12.500" cy="12.500" r="8.500" fill="none" stroke="#78b5ea" stroke-width="6"/><circle cx="12.500" cy="12.500" r="11.500" class="bk"/><circle cx="12.500" cy="12.500" r="5.500" class="bk"/><path d="M12.500 7V1A11.500 11.500 0 0 1 24 12.500h-6A5.500 5.500 0 0 0 12.500 7z" fill="#d2d0ce" stroke="#787674"/></svg>
            <svg viewBox="0 0 25 25"><rect x="1" y="1" width="23" height="23" class="w"/><rect x="1" y="1" width="11" height="12" class="b"/><rect x="1" y="13" width="11" height="11" class="b"/><path d="M12 8h12M18 8v16M12 16h12" class="k"/></svg>

            <svg viewBox="0 0 25 25"><path d="M7 1C0 6 0 17 8 20" class="k"/><circle cx="12" cy="11" r="8.500" fill="#faf9f8" stroke="#3b3a39" stroke-width="1.500"/><path d="M7 6l5-2 2 4-3 3 2 4-3 2-1-5-3-2zM16 11l3 0-2 5z" fill="#3d8f56"/><path d="M12 20v3M6 24h12" class="k"/></svg>
            <svg viewBox="0 0 25 25"><path d="M1 2l6 3 1 10 5 8-7-2-5-8z" class="b"/><path d="M7 5l9 3 6-6 2 3v7l-8-1-3 4-4-2z" fill="#a9a8a6" stroke="#3b3a39" stroke-width="1.200"/><path d="M16 12l8 0-1 7-10 4 0-7z" class="b"/></svg>
            <svg viewBox="0 0 25 25"><path d="M1 20a11.500 11.500 0 0 1 7-11v4a8 8 0 0 0-4 7z" fill="none" stroke="#3b3a39" stroke-width="1.300"/><path d="M8 9a11.500 11.500 0 0 1 16 11h-5a7 7 0 0 0-9-7z" class="b"/><path d="M11 22l4-7" stroke="#3b3a39" stroke-width="3"/></svg>
            <svg viewBox="0 0 25 25"><rect x="1" y="3" width="23" height="20" class="w"/><text x="12.500" y="15" text-anchor="middle" font-family="Open Sans" font-size="10.500" fill="#2086c9">123</text><path d="M4 19h17" stroke="#787674"/></svg>
            <svg viewBox="0 0 25 25"><rect x="1" y="1" width="23" height="23" class="w"/><path d="M5 5v15" stroke="#787674" stroke-width="1.300"/><path d="M8 6h10M8 10h13M8 14h10M8 18h8" stroke="#106ebe" stroke-width="1.600"/></svg>
            <svg viewBox="0 0 25 25"><rect x="1" y="3" width="23" height="20" class="w"/><path d="M4 14l3.500-6 3.500 6z" fill="#5fb276" stroke="#3d8f56"/><path d="M13 8h8l-4 6z" fill="#e8374b" stroke="#c02535"/><path d="M4 18h17" stroke="#787674"/></svg>

            <svg viewBox="0 0 25 25"><path d="M1 24V1h23v11M1 24h10M1 5h23" class="k"/><path d="M5 9h4v4H5zM5 15h4v4H5z" fill="#faf9f8" stroke="#787674"/><path d="M13 14h11l-4 5v6h-3v-6z" fill="#faf9f8" stroke="#3b3a39" stroke-width="1.500"/></svg>
            <svg viewBox="0 0 25 25"><rect x="1" y="1" width="23" height="23" fill="#faf9f8" stroke="#6b6a68" stroke-width="1.500"/><path d="M1 5h23" stroke="#6b6a68" stroke-width="2"/><path d="M1 11h23M1 17h23M9 5v19M16.500 5v19" stroke="#8a8886" fill="none"/></svg>
            <svg viewBox="0 0 25 25"><rect x="1" y="1" width="23" height="23" fill="#faf9f8" stroke="#3b3a39" stroke-width="1.500"/><path d="M1 5h23" stroke="#6b6a68" stroke-width="2"/><rect x="2" y="11" width="15" height="6" fill="#78b5ea"/><rect x="16" y="6" width="7" height="17" fill="#78b5ea"/><path d="M1 11h23M1 17h23M9 5v19M16.500 5v19" stroke="#106ebe" fill="none"/></svg>
            <svg viewBox="0 0 25 25"><text x="12.500" y="20" text-anchor="middle" font-family="Open Sans" font-weight="700" font-size="20" fill="#2086c9">R</text></svg>
            <svg viewBox="0 0 25 25" class="overflow-visible"><text x="12.500" y="18" text-anchor="middle" font-family="Open Sans" font-weight="600" font-size="22" fill="#2086c9">Py</text></svg>
            <svg viewBox="0 0 25 25"><path d="M1 0v24h24" class="k"/><path d="M1 8h17" stroke="#106ebe" stroke-width="1.300"/><circle cx="20" cy="5" r="3" class="b"/><path d="M1 13h12M1 18h7" stroke="#787674" stroke-width="1.300"/><circle cx="15" cy="12" r="2" class="g"/><circle cx="9" cy="17" r="2" class="g"/></svg>

            <svg viewBox="0 0 25 25"><rect x="1" y="9" width="9" height="6" class="b"/><rect x="16" y="1" width="8" height="6" class="b"/><rect x="16" y="10" width="8" height="6" class="b"/><rect x="16" y="19" width="8" height="6" class="b"/><path d="M10 12h3M13 4v18M13 4h3M13 13h3M13 22h3" class="k"/></svg>
            <svg viewBox="0 0 25 25"><path d="M1 2h23v16H11l-6 6v-6H1z" fill="#faf9f8" stroke="#106ebe" stroke-width="1.500"/></svg>
            <svg viewBox="0 0 25 25"><path d="M4 1h13l7 7v16H4z" class="w"/><path d="M17 1v7h7" class="k"/><circle cx="4" cy="9" r="2.500" fill="#faf9f8" stroke="#106ebe"/><path d="M8 10h10M8 14h13M8 18h8" stroke="#106ebe"/></svg>
            <svg viewBox="0 0 25 25"><path d="M2 1h13l8 7v16H2z" class="w"/><path d="M15 1v7h8" class="k"/><path d="M6 16h3v5H6zM11 18h3v3h-3zM16 13h3v8h-3z" fill="#3b3a39"/></svg>
            <svg viewBox="0 0 25 25"><rect x="1" y="1" width="22" height="23" fill="#faf9f8" stroke="#106ebe" stroke-width="1.800"/><path d="M1 15c5 0 6 8 10 9h6l-3-5 2-6 6-5V1h-8l-3 7-4 5z" fill="#78b5ea"/><path d="M3 0h7v8l-3.500 6L3 8z" fill="#d86f0a"/><circle cx="21" cy="20" r="3.500" fill="#d86f0a"/><circle cx="23" cy="13" r="1.800" fill="#d86f0a"/></svg>
            <svg viewBox="0 0 25 25" fill="none" stroke="#8f3fa9" stroke-width="1.600"><path d="M12.500 1L24 12.500 12.500 24 1 12.500zM7 7l11 11M18 7L7 18"/></svg>

            <svg viewBox="0 0 25 25"><path d="M1 1h14l10 11-10 12H1l10-12z" fill="#faf9f8" stroke="#1783d8" stroke-width="1.600"/><path d="M6 20l11-12M11 21l9-10" stroke="#1783d8" stroke-width="1.600"/></svg>
            <svg viewBox="0 0 25 25"><path d="M3 12.500h3v3H3zM11 12.500h3v3h-3zM19 12.500h3v3h-3z" fill="#3b3a39"/></svg>
        </div>
        <div class="viz-tabs d-flex">
            <svg width="30" height="30" viewBox="0 0 30 30" fill="none" stroke="#3b3a39" stroke-width="1.200"><path d="M1 1h29" stroke-width="1.500"/><rect x="1" y="5" width="28" height="8" stroke-dasharray="2 1.500"/><rect x="1" y="19" width="28" height="9" stroke-dasharray="2 1.500"/></svg>
            <svg width="28" height="30" viewBox="0 0 28 30" fill="none" stroke="#3b3a39" stroke-width="1.500"><rect x="1" y="1" width="23" height="6" rx="2"/><path d="M24 4h3v7H13v5"/><rect x="10" y="16" width="6" height="13"/></svg>
        </div>
        <div class="viz-line"></div>
        <div class="viz-label">Values</div>
        <div class="viz-drop">Add data fields here</div>
        <div class="viz-h2">Drill through</div>
        <div class="viz-sub viz-sub-a">Cross-report</div>
        <div class="viz-tog viz-tog-a d-flex align-items-center">
            <span>Off</span>
            <svg width="45" height="18" viewBox="0 0 45 18"><path d="M14 8h31M14 10h31" stroke="#8a8886"/><circle cx="9" cy="9" r="7" fill="#f3f2f1" stroke="#605e5c" stroke-width="2.500"/></svg>
        </div>
        <div class="viz-sub viz-sub-b">Keep all filters</div>
        <div class="viz-tog viz-tog-b d-flex align-items-center">
            <span>On</span>
            <svg width="46" height="18" viewBox="0 0 46 18"><path d="M0 8h34M0 10h34" stroke="#8a8886"/><circle cx="36" cy="9" r="9" fill="#605e5c"/></svg>
        </div>
        <div class="viz-drop viz-drop2">Add drill-through fields here</div>
        <div class="viz-bar"></div>
    </div>

    <!-- fields pane -->
    <div class="pb-fields">
        <div class="pn-head d-flex align-items-center justify-content-between">
            <span class="pn-title">Fields</span>
            <svg width="10" height="17"><use href="#cvr"/></svg>
        </div>
        <div class="fld-search d-flex align-items-center">
            <svg width="22" height="22"><use href="#mag" color="#3b3a39"/></svg>
            <span>Search</span>
        </div>
        <div class="fld-rule"></div>
        <div class="list-group list-group-flush fld-list">
            <div class="list-group-item fld-item"><svg width="10" height="16"><use href="#cvr"/></svg><svg class="tb"><use href="#tbl"/></svg>cpi_cpih_rpi</div>
            <div class="list-group-item fld-item"><svg width="10" height="16"><use href="#cvr"/></svg><svg class="tb"><use href="#tbl"/></svg>Date</div>
            <div class="list-group-item fld-item"><svg width="10" height="16"><use href="#cvr"/></svg><svg class="tb"><use href="#tbl"/></svg>Expense_Monthly</div>
            <div class="list-group-item fld-item"><svg width="10" height="16"><use href="#cvr"/></svg><svg class="tb"><use href="#tbl"/></svg>Expense_Monthly_main</div>
            <div class="list-group-item fld-item"><svg width="10" height="16"><use href="#cvr"/></svg><svg class="tb"><use href="#tbl"/></svg>Expense_Product</div>
            <div class="list-group-item fld-item"><svg width="10" height="16"><use href="#cvr"/></svg><svg class="tb"><use href="#tbl"/></svg>Expense_Weight</div>
            <div class="list-group-item fld-item"><svg width="10" height="16"><use href="#cvr"/></svg><svg class="tb"><use href="#tbl"/></svg>Inflation_Measure<svg class="fld-dots" width="16" height="3"><use href="#dots"/></svg></div>
            <div class="list-group-item fld-item"><svg width="10" height="16"><use href="#cvr"/></svg><svg class="tb"><use href="#tbl"/></svg>Measure_Income_Vs_In...</div>
            <div class="list-group-item fld-item"><svg width="10" height="16"><use href="#cvr"/></svg><svg class="tb"><use href="#tbl"/></svg>Nurse_Salary</div>
            <div class="list-group-item fld-item"><svg width="10" height="16"><use href="#cvr"/></svg><svg class="tb"><use href="#tbl"/></svg>Profession_different_type</div>
            <div class="list-group-item fld-item"><svg width="10" height="16"><use href="#cvr"/></svg><svg class="tb"><use href="#tbl"/></svg>Profession_Nurse</div>
            <div class="list-group-item fld-item"><svg width="10" height="16"><use href="#cvr"/></svg><svg class="tb"><use href="#tbl"/></svg>Salary</div>
            <div class="list-group-item fld-item"><svg width="10" height="16"><use href="#cvr"/></svg><svg class="tb"><use href="#tbl"/></svg>Yearly_Date</div>
            <div class="list-group-item fld-item"><svg width="10" height="16"><use href="#cvr"/></svg><svg class="tb"><use href="#tbl"/></svg>Yearly_Expense</div>
        </div>
    </div>
</div>
<div class="pb-foot"></div>

</body>
</html>
